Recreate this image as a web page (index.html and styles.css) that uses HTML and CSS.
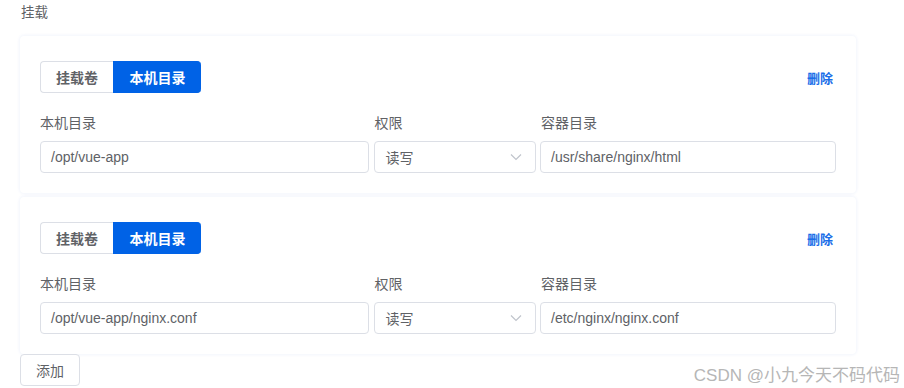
FILE: index.html
```html
<!DOCTYPE html>
<html lang="zh">
<head>
<meta charset="utf-8">
<link rel="stylesheet" href="styles.css">
</head>
<body>
<div class="page">
  <div class="title">挂载</div>
  <div class="card">
    <div class="card-head">
      <div class="seg">
        <span class="seg-btn">挂载卷</span>
        <span class="seg-btn active">本机目录</span>
      </div>
      <a class="del">删除</a>
    </div>
    <div class="grid">
      <div class="label">本机目录</div>
      <div class="label">权限</div>
      <div class="label">容器目录</div>
      <div class="input">/opt/vue-app</div>
      <div class="input select"><span>读写</span><svg class="arrow" width="12" height="8" viewBox="0 0 12 8"><path d="M1 1.5 L6 6.5 L11 1.5" fill="none" stroke="#c0c4cc" stroke-width="1.2"/></svg></div>
      <div class="input">/usr/share/nginx/html</div>
    </div>
  </div>
  <div class="card">
    <div class="card-head">
      <div class="seg">
        <span class="seg-btn">挂载卷</span>
        <span class="seg-btn active">本机目录</span>
      </div>
      <a class="del">删除</a>
    </div>
    <div class="grid">
      <div class="label">本机目录</div>
      <div class="label">权限</div>
      <div class="label">容器目录</div>
      <div class="input">/opt/vue-app/nginx.conf</div>
      <div class="input select"><span>读写</span><svg class="arrow" width="12" height="8" viewBox="0 0 12 8"><path d="M1 1.5 L6 6.5 L11 1.5" fill="none" stroke="#c0c4cc" stroke-width="1.2"/></svg></div>
      <div class="input">/etc/nginx/nginx.conf</div>
    </div>
  </div>
  <button class="add">添加</button>
  <div class="watermark">CSDN @小九今天不码代码</div>
</div>
</body>
</html>
```
FILE: styles.css
```css
* { box-sizing: border-box; }
html, body { margin: 0; padding: 0; background: #fff; }
body {
  font-family: "Liberation Sans", "Noto Sans CJK SC", sans-serif;
  color: #606266;
  font-size: 14px;
}
.page {
  position: relative;
  width: 904px;
  height: 388px;
  padding: 0 48px 0 20px;
  overflow: hidden;
}
.title {
  padding-left: 1px;
  height: 26px;
  line-height: 26px;
  font-size: 13.5px;
  color: #606266;
  margin-bottom: 10px;
}
.card {
  width: 836px;
  background: #fff;
  border-radius: 4px;
  box-shadow: 0 0 3px 1px rgba(30, 90, 200, 0.06);
  padding: 25px 20px 20px 20px;
  margin-bottom: 4px;
}
.card + .card { margin-bottom: 0; }
.card-head {
  display: flex;
  align-items: center;
  justify-content: space-between;
  height: 32px;
  margin-bottom: 17px;
}
.seg { display: flex; height: 32px; }
.seg-btn {
  display: flex;
  align-items: center;
  justify-content: center;
  height: 32px;
  font-weight: bold;
  font-size: 14px;
  font-family: "Noto Sans CJK SC", sans-serif;
  color: #606266;
  border: 1px solid #dcdfe6;
  border-right: none;
  border-radius: 4px 0 0 4px;
  width: 73px;
}
.seg-btn.active {
  width: 88px;
  background: #0062e6;
  border-color: #0062e6;
  color: #fff;
  border-radius: 0 4px 4px 0;
}
.del {
  color: #1a6ee8;
  font-weight: bold;
  font-size: 13px;
  font-family: "Noto Sans CJK SC", sans-serif;
  margin-right: 3px;
}
.grid {
  display: grid;
  grid-template-columns: 329px 162px 296px;
  column-gap: 0;
  justify-content: space-between;
  row-gap: 7px;
}
.label {
  height: 24px;
  line-height: 24px;
  font-size: 14px;
  font-family: "Noto Sans CJK SC", sans-serif;
  color: #606266;
}
.grid .label:nth-child(2), .grid .label:nth-child(3) { padding-left: 1px; }
.input {
  height: 32px;
  border: 1px solid #dcdfe6;
  border-radius: 4px;
  padding: 0 10px;
  display: flex;
  align-items: center;
  font-size: 14px;
  color: #606266;
}
.select {
  justify-content: space-between;
  padding: 0 13px 0 11px;
  font-family: "Noto Sans CJK SC", sans-serif;
}
.add {
  display: block;
  width: 60px;
  height: 32px;
  background: #fff;
  border: 1px solid #dcdfe6;
  border-radius: 4px;
  font-family: "Noto Sans CJK SC", sans-serif;
  font-size: 14px;
  color: #606266;
  padding: 0;
}
.watermark {
  position: absolute;
  right: 4px;
  bottom: 2px;
  font-size: 17px;
  color: #b6b6b6;
  font-family: "Liberation Sans", "Noto Sans CJK SC", sans-serif;
  white-space: nowrap;
}
```
